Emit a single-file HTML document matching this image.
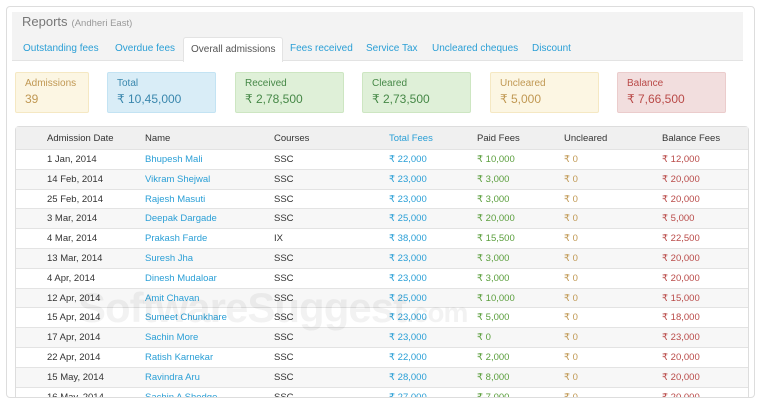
<!DOCTYPE html>
<html><head><style>
*{margin:0;padding:0;box-sizing:border-box}
body{width:767px;height:410px;background:#fff;font-family:"Liberation Sans",sans-serif;font-size:10px;color:#333;position:relative;overflow:hidden}
.outer{position:absolute;left:6px;top:6px;width:749px;height:392px;border:1px solid #ddd;border-radius:4px;overflow:hidden}
.hdr{position:absolute;left:5px;top:5px;width:731px;height:49px;background:#f3f3f3;border-bottom:1px solid #e3e3e3}
.title{position:absolute;left:10px;top:2px;font-size:13px;color:#777}
.title span{font-size:9.5px;color:#999;margin-left:4px}
.tab{position:absolute;top:31px;font-size:10px;color:#2a9fd6}
.tab.act{top:25px;height:25px;background:#fff;border:1px solid #e3e3e3;border-bottom:none;color:#555;padding:6px 7px 0;border-radius:3px 3px 0 0}
.card{position:absolute;top:65px;height:41px;border:1px solid;border-radius:2px;padding:5px 9px}
.card .l{font-size:10px}
.card .v{font-size:12px;margin-top:3px}
.tbl{position:absolute;left:8px;top:119px;width:734px;border:1px solid #ddd;border-radius:4px 4px 0 0}
.row{height:19.8px;border-top:1px solid #e3e3e3;position:relative;font-size:9.5px}
.row.h{background:#f0f0f0;height:22px;border-top:none;color:#333}
.row:nth-child(odd):not(.h){background:#f7f7f7}
.row div{position:absolute;top:4px}
.row.h div{top:6px}
.c1{left:31px}.c2{left:129px;color:#2a9fd6}.c3{left:258px}.c4{left:373px;color:#2a9fd6}.c5{left:461px;color:#5a9e3c}.c6{left:548px;color:#c09853}.c7{left:646px;color:#b94a48}
.row.h .c2,.row.h .c5,.row.h .c6,.row.h .c7{color:#333}
.wm{position:absolute;left:78px;top:284px;font-size:42px;font-weight:bold;color:rgba(0,0,0,0.05);letter-spacing:-1px}
.wm span{font-size:28px}
</style></head><body>
<div class="outer">
<div class="hdr">
<div class="title">Reports<span>(Andheri East)</span></div>
<div class="tab" style="left:11px">Outstanding fees</div>
<div class="tab" style="left:103px">Overdue fees</div>
<div class="tab act" style="left:171px">Overall admissions</div>
<div class="tab" style="left:278px">Fees received</div>
<div class="tab" style="left:354px">Service Tax</div>
<div class="tab" style="left:420px">Uncleared cheques</div>
<div class="tab" style="left:520px">Discount</div>
</div>
<div class="card" style="left:8px;width:74px;background:#fcf6e3;border-color:#f5e8c3;color:#c09853"><div class="l">Admissions</div><div class="v">39</div></div>
<div class="card" style="left:100px;width:109px;background:#d9edf7;border-color:#c3e3f3;color:#3a87ad"><div class="l">Total</div><div class="v">₹ 10,45,000</div></div>
<div class="card" style="left:228px;width:109px;background:#dff0d8;border-color:#cde6c2;color:#468847"><div class="l">Received</div><div class="v">₹ 2,78,500</div></div>
<div class="card" style="left:355px;width:109px;background:#dff0d8;border-color:#cde6c2;color:#468847"><div class="l">Cleared</div><div class="v">₹ 2,73,500</div></div>
<div class="card" style="left:483px;width:109px;background:#fcf6e3;border-color:#f5e8c3;color:#c09853"><div class="l">Uncleared</div><div class="v">₹ 5,000</div></div>
<div class="card" style="left:610px;width:109px;background:#f2dede;border-color:#ebcccc;color:#b94a48"><div class="l">Balance</div><div class="v">₹ 7,66,500</div></div>
<div class="tbl">
<div class="row h"><div class="c1">Admission Date</div><div class="c2">Name</div><div class="c3">Courses</div><div class="c4">Total Fees</div><div class="c5">Paid Fees</div><div class="c6">Uncleared</div><div class="c7">Balance Fees</div></div>
<div class="row"><div class="c1">1 Jan, 2014</div><div class="c2">Bhupesh Mali</div><div class="c3">SSC</div><div class="c4">₹ 22,000</div><div class="c5">₹ 10,000</div><div class="c6">₹ 0</div><div class="c7">₹ 12,000</div></div>
<div class="row"><div class="c1">14 Feb, 2014</div><div class="c2">Vikram Shejwal</div><div class="c3">SSC</div><div class="c4">₹ 23,000</div><div class="c5">₹ 3,000</div><div class="c6">₹ 0</div><div class="c7">₹ 20,000</div></div>
<div class="row"><div class="c1">25 Feb, 2014</div><div class="c2">Rajesh Masuti</div><div class="c3">SSC</div><div class="c4">₹ 23,000</div><div class="c5">₹ 3,000</div><div class="c6">₹ 0</div><div class="c7">₹ 20,000</div></div>
<div class="row"><div class="c1">3 Mar, 2014</div><div class="c2">Deepak Dargade</div><div class="c3">SSC</div><div class="c4">₹ 25,000</div><div class="c5">₹ 20,000</div><div class="c6">₹ 0</div><div class="c7">₹ 5,000</div></div>
<div class="row"><div class="c1">4 Mar, 2014</div><div class="c2">Prakash Farde</div><div class="c3">IX</div><div class="c4">₹ 38,000</div><div class="c5">₹ 15,500</div><div class="c6">₹ 0</div><div class="c7">₹ 22,500</div></div>
<div class="row"><div class="c1">13 Mar, 2014</div><div class="c2">Suresh Jha</div><div class="c3">SSC</div><div class="c4">₹ 23,000</div><div class="c5">₹ 3,000</div><div class="c6">₹ 0</div><div class="c7">₹ 20,000</div></div>
<div class="row"><div class="c1">4 Apr, 2014</div><div class="c2">Dinesh Mudaloar</div><div class="c3">SSC</div><div class="c4">₹ 23,000</div><div class="c5">₹ 3,000</div><div class="c6">₹ 0</div><div class="c7">₹ 20,000</div></div>
<div class="row"><div class="c1">12 Apr, 2014</div><div class="c2">Amit Chavan</div><div class="c3">SSC</div><div class="c4">₹ 25,000</div><div class="c5">₹ 10,000</div><div class="c6">₹ 0</div><div class="c7">₹ 15,000</div></div>
<div class="row"><div class="c1">15 Apr, 2014</div><div class="c2">Sumeet Chunkhare</div><div class="c3">SSC</div><div class="c4">₹ 23,000</div><div class="c5">₹ 5,000</div><div class="c6">₹ 0</div><div class="c7">₹ 18,000</div></div>
<div class="row"><div class="c1">17 Apr, 2014</div><div class="c2">Sachin More</div><div class="c3">SSC</div><div class="c4">₹ 23,000</div><div class="c5">₹ 0</div><div class="c6">₹ 0</div><div class="c7">₹ 23,000</div></div>
<div class="row"><div class="c1">22 Apr, 2014</div><div class="c2">Ratish Karnekar</div><div class="c3">SSC</div><div class="c4">₹ 22,000</div><div class="c5">₹ 2,000</div><div class="c6">₹ 0</div><div class="c7">₹ 20,000</div></div>
<div class="row"><div class="c1">15 May, 2014</div><div class="c2">Ravindra Aru</div><div class="c3">SSC</div><div class="c4">₹ 28,000</div><div class="c5">₹ 8,000</div><div class="c6">₹ 0</div><div class="c7">₹ 20,000</div></div>
<div class="row"><div class="c1">16 May, 2014</div><div class="c2">Sachin A Shedge</div><div class="c3">SSC</div><div class="c4">₹ 27,000</div><div class="c5">₹ 7,000</div><div class="c6">₹ 0</div><div class="c7">₹ 20,000</div></div>
</div>
</div>
<div class="wm">SoftwareSuggest<span>.com</span></div>
</body></html>
